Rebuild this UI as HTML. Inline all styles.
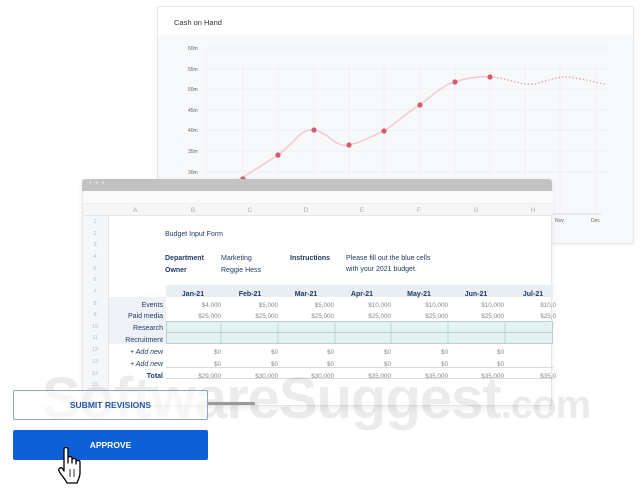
<!DOCTYPE html>
<html><head><style>
*{margin:0;padding:0;box-sizing:border-box}
body{width:641px;height:499px;background:#fff;position:relative;overflow:hidden;font-family:"Liberation Sans",sans-serif}
.abs{position:absolute}
.t{position:absolute;font-size:7px;white-space:nowrap}
</style></head><body>
<div class="abs" style="left:157px;top:6px;width:477px;height:238px;border:1px solid #e6e8ec;background:#f7f8fa;box-shadow:0 1px 3px rgba(0,0,0,.06)">
 <div class="abs" style="left:0;top:0;width:475px;height:28px;background:#fff"></div>
 <div class="t" style="left:16px;top:11px;font-size:7.5px;color:#333">Cash on Hand</div>
</div>
<svg class="abs" style="left:0;top:0" width="641" height="499">
 <g stroke="#eceef1" stroke-width="0.7">
  <line x1="206" y1="48" x2="608" y2="48"/><line x1="206" y1="69" x2="608" y2="69"/><line x1="206" y1="89" x2="608" y2="89"/><line x1="206" y1="110" x2="608" y2="110"/><line x1="206" y1="130" x2="608" y2="130"/><line x1="206" y1="151" x2="608" y2="151"/><line x1="206" y1="172" x2="608" y2="172"/>
  <line x1="206" y1="48" x2="206" y2="214"/><line x1="243" y1="64" x2="243" y2="214"/><line x1="278" y1="64" x2="278" y2="214"/><line x1="314" y1="64" x2="314" y2="214"/><line x1="349" y1="64" x2="349" y2="214"/><line x1="384" y1="64" x2="384" y2="214"/><line x1="420" y1="64" x2="420" y2="214"/><line x1="455" y1="64" x2="455" y2="214"/><line x1="490" y1="64" x2="490" y2="214"/><line x1="525" y1="64" x2="525" y2="214"/><line x1="560" y1="64" x2="560" y2="214"/><line x1="596" y1="64" x2="596" y2="214"/>
 </g>
 <line x1="550" y1="214" x2="601" y2="214" stroke="#ccc" stroke-width="0.8"/>
 <g font-size="5" fill="#666" font-family="Liberation Sans">
  <text x="188" y="50">60m</text><text x="188" y="71">55m</text><text x="188" y="91">50m</text><text x="188" y="112">45m</text><text x="188" y="132">40m</text><text x="188" y="153">35m</text><text x="188" y="174">30m</text>
  <text x="555" y="222">Nov</text><text x="591" y="222">Dec</text>
 </g>
 <path d="M230,185 C255,170 270,160 278,155 C295,143 300,128 314,130 C330,133 335,148 349,145 C362,142 370,137 384,131 C400,120 410,110 420,105 C435,93 445,84 455,82 C470,77 480,76 490,77" fill="none" stroke="#f0ccd2" stroke-width="1.6"/>
 <path d="M490,77 C510,78 520,86 535,84 C550,80 560,75 575,78 C590,80 600,84 607,84" fill="none" stroke="#e8a8b4" stroke-width="1.5" stroke-dasharray="1.5 2"/>
 <g fill="#d9596e"><circle cx="278" cy="155" r="2.6"/><circle cx="314" cy="130" r="2.6"/><circle cx="349" cy="145" r="2.6"/><circle cx="384" cy="131" r="2.6"/><circle cx="420" cy="105" r="2.6"/><circle cx="455" cy="82" r="2.6"/><circle cx="490" cy="77" r="2.6"/><circle cx="243" cy="179" r="2.6"/></g>
</svg>

<div class="abs" style="left:82px;top:179px;width:470px;height:227px;background:#fff;border:1px solid #e4e6ea;box-shadow:0 2px 6px rgba(0,0,0,.08)">
 <div class="abs" style="left:-1px;top:-1px;width:470px;height:12px;background:#c2c2c2;border-radius:4px 4px 0 0"></div>
 <div class="t" style="left:6px;top:0px;color:#e8e8e8;font-size:7px;letter-spacing:1px">• • •</div>
 <div class="abs" style="left:0;top:11px;width:470px;height:13px;background:#fafafa;border-bottom:1px solid #eee"></div>
 <div class="abs" style="left:0;top:24px;width:470px;height:12px;background:#f5f6f7;border-bottom:1px solid #e6e6e6"></div>
 <div class="abs" style="left:0;top:36px;width:26px;height:190px;background:#f5f6f8;border-right:1px solid #e6e6e6"></div>
 <div class="abs" style="left:26px;top:117px;width:57px;height:47px;background:#eef2f7"></div>
 <div class="abs" style="left:83px;top:105px;width:387px;height:12px;background:#e9eef4"></div>
 <div class="abs" style="left:83px;top:141px;width:387px;height:23px;background:#e3f3f1;border:1px solid #b9cfd2;
  background-image:linear-gradient(#b9cfd2,#b9cfd2);background-size:387px 1px;background-position:0 10px;background-repeat:no-repeat"></div>
 <div class="abs" style="left:83px;top:187px;width:387px;height:12px;border-top:1px solid #d6dade;border-bottom:1px solid #d6dade"></div>
</div>
<svg class="abs" style="left:0;top:0" width="641" height="499">
 <g stroke="#b9cfd2" stroke-width="0.8"><line x1="221" y1="321" x2="221" y2="344"/><line x1="278" y1="321" x2="278" y2="344"/><line x1="335" y1="321" x2="335" y2="344"/><line x1="391" y1="321" x2="391" y2="344"/><line x1="448" y1="321" x2="448" y2="344"/><line x1="505" y1="321" x2="505" y2="344"/></g>
 <g font-family="Liberation Sans" font-size="6.5" fill="#aaa" text-anchor="middle">
  <text x="135" y="212">A</text><text x="193" y="212">B</text><text x="250" y="212">C</text><text x="306" y="212">D</text><text x="362" y="212">E</text><text x="419" y="212">F</text><text x="476" y="212">G</text><text x="533" y="212">H</text>
 </g>
 <g font-family="Liberation Sans" font-size="5.5" fill="#bbb" text-anchor="middle">
  <text x="95" y="223">1</text><text x="95" y="235">2</text><text x="95" y="246">3</text><text x="95" y="258">4</text><text x="95" y="270">5</text><text x="95" y="281">6</text><text x="95" y="293">7</text><text x="95" y="305">8</text><text x="95" y="316">9</text><text x="95" y="328">10</text><text x="95" y="339">11</text><text x="95" y="351">12</text><text x="95" y="363">13</text><text x="95" y="375">14</text><text x="95" y="386">15</text>
 </g>
 <g font-family="Liberation Sans" font-size="7" fill="#1f3a64">
  <text x="165" y="236">Budget Input Form</text>
  <text x="165" y="260" font-weight="bold">Department</text><text x="165" y="272" font-weight="bold">Owner</text>
  <text x="221" y="260">Marketing</text><text x="221" y="272">Reggie Hess</text>
  <text x="290" y="260" font-weight="bold">Instructions</text>
  <text x="346" y="260">Please fill out the blue cells</text><text x="346" y="271">with your 2021 budget.</text>
 </g>
 <g font-family="Liberation Sans" font-size="7" fill="#1f3a64" font-weight="bold" text-anchor="middle">
  <text x="193" y="296">Jan-21</text><text x="250" y="296">Feb-21</text><text x="306" y="296">Mar-21</text><text x="362" y="296">Apr-21</text><text x="419" y="296">May-21</text><text x="476" y="296">Jun-21</text><text x="533" y="296">Jul-21</text>
 </g>
 <g font-family="Liberation Sans" font-size="7" fill="#1f3a64" text-anchor="end">
  <text x="163" y="307">Events</text><text x="163" y="318">Paid media</text><text x="163" y="330">Research</text><text x="163" y="342">Recruitment</text>
  <text x="163" y="354" font-style="italic">+ Add new</text><text x="163" y="366" font-style="italic">+ Add new</text><text x="163" y="378" font-weight="bold">Total</text>
 </g>
 <g font-family="Liberation Sans" font-size="6.3" fill="#888" text-anchor="end">
  <text x="221" y="307">$4,000</text><text x="278" y="307">$5,000</text><text x="334" y="307">$5,000</text><text x="391" y="307">$10,000</text><text x="448" y="307">$10,000</text><text x="504" y="307">$10,000</text><text x="556" y="307">$10,0</text>
  <text x="221" y="318">$25,000</text><text x="278" y="318">$25,000</text><text x="334" y="318">$25,000</text><text x="391" y="318">$25,000</text><text x="448" y="318">$25,000</text><text x="504" y="318">$25,000</text><text x="556" y="318">$25,0</text>
  <text x="221" y="354">$0</text><text x="278" y="354">$0</text><text x="334" y="354">$0</text><text x="391" y="354">$0</text><text x="448" y="354">$0</text><text x="504" y="354">$0</text>
  <text x="221" y="366">$0</text><text x="278" y="366">$0</text><text x="334" y="366">$0</text><text x="391" y="366">$0</text><text x="448" y="366">$0</text><text x="504" y="366">$0</text>
  <text x="221" y="378">$29,000</text><text x="278" y="378">$30,000</text><text x="334" y="378">$30,000</text><text x="391" y="378">$35,000</text><text x="448" y="378">$35,000</text><text x="504" y="378">$35,000</text><text x="556" y="378">$35,0</text>
 </g>
</svg>
<div class="t" style="left:42px;top:365px;font-size:58px;font-weight:bold;color:rgba(0,0,0,0.08);letter-spacing:-1px">SoftwareSuggest<span style="font-size:40px">.com</span></div>
<div class="abs" style="left:208px;top:402px;width:47px;height:3px;background:#9a9a9a"></div>
<div class="abs" style="left:13px;top:390px;width:195px;height:30px;border:1.5px solid #8aa4c4;border-radius:2px;background:rgba(255,255,255,.6);color:#2457a8;font-size:8.5px;font-weight:bold;text-align:center;line-height:28px">SUBMIT REVISIONS</div>
<div class="abs" style="left:13px;top:430px;width:195px;height:30px;background:#0f5fd6;border-radius:2px;color:#fff;font-size:8.5px;font-weight:bold;text-align:center;line-height:30px">APPROVE</div>
<svg class="abs" style="left:58px;top:447px" width="36" height="40">
 <path d="M6,2 C6,0 10,0 10,2 L10,16 L10,11 C10,9 14,9 14,11 L14,16 L14,13 C14,11 18,11 18,13 L18,17 L18,15 C18,13 22,13 22,15 L22,26 C22,30 20,33 19,36 L9,36 C8,33 3,28 1,24 C0,22 2,20 4,21 L6,24 Z" fill="#fff" stroke="#000" stroke-width="1.3" stroke-linejoin="round"/>
 <line x1="12" y1="22" x2="12" y2="30" stroke="#000" stroke-width="0.8"/><line x1="16" y1="22" x2="16" y2="30" stroke="#000" stroke-width="0.8"/>
</svg>
</body></html>
